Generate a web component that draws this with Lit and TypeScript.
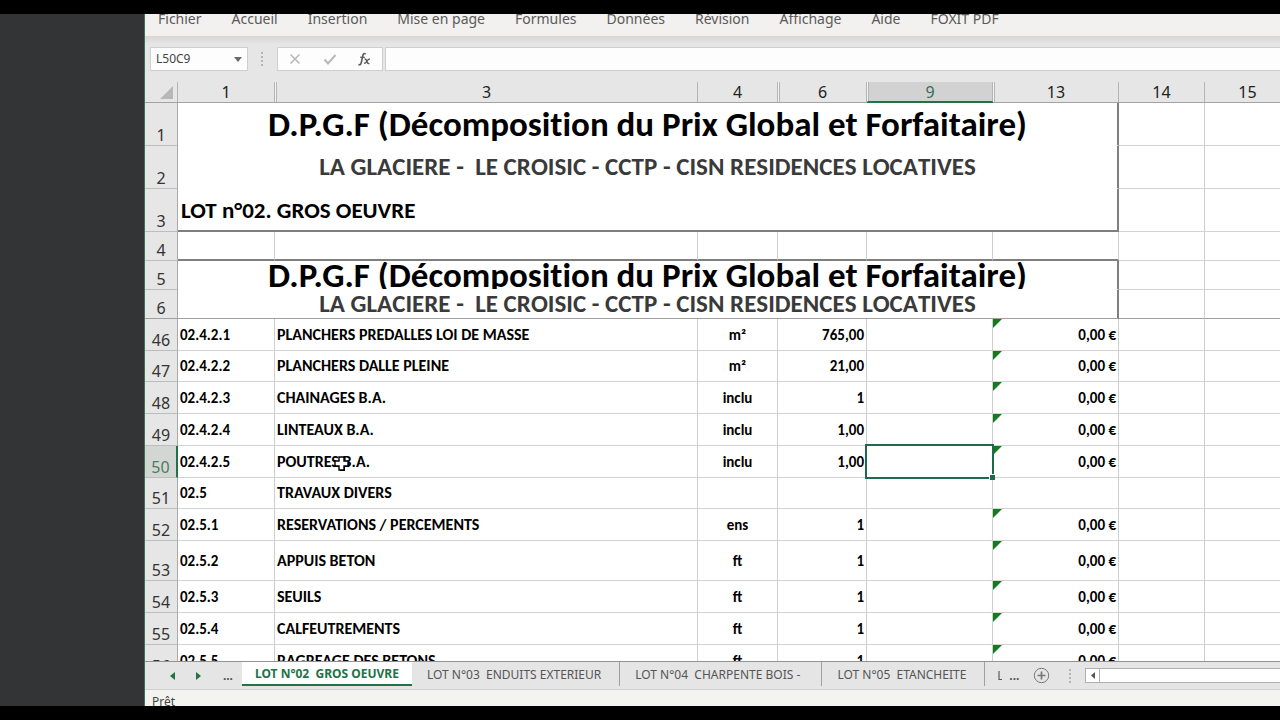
import { LitElement, html, css, nothing, svg } from "lit";
import { customElement, state } from "lit/decorators.js";
import { classMap } from "lit/directives/class-map.js";
import { styleMap } from "lit/directives/style-map.js";

interface Line {
  row: number;
  height: number;
  code: string;
  label: string;
  unit?: string;
  qty?: string;
  total?: string;
}

const MENUS = ["Fichier", "Accueil", "Insertion", "Mise en page", "Formules", "Données", "Révision", "Affichage", "Aide", "FOXIT PDF"];

const COLUMNS = [
  { name: "1", width: 97 },
  { name: "3", width: 423, afterHidden: true },
  { name: "4", width: 80 },
  { name: "6", width: 89, afterHidden: true },
  { name: "9", width: 126, afterHidden: true, active: true },
  { name: "13", width: 126, afterHidden: true },
  { name: "14", width: 86 },
  { name: "15", width: 86 },
];

const TITLE = "D.P.G.F (Décomposition du Prix Global et Forfaitaire)";
const SUBTITLE = "LA GLACIERE -\u00a0 LE CROISIC - CCTP - CISN RESIDENCES LOCATIVES";

const LINES: Line[] = [
  { row: 46, height: 32, code: "02.4.2.1", label: "PLANCHERS PREDALLES LOI DE MASSE", unit: "m²", qty: "765,00", total: "0,00 €" },
  { row: 47, height: 31, code: "02.4.2.2", label: "PLANCHERS DALLE PLEINE", unit: "m²", qty: "21,00", total: "0,00 €" },
  { row: 48, height: 32, code: "02.4.2.3", label: "CHAINAGES B.A.", unit: "inclu", qty: "1", total: "0,00 €" },
  { row: 49, height: 32, code: "02.4.2.4", label: "LINTEAUX B.A.", unit: "inclu", qty: "1,00", total: "0,00 €" },
  { row: 50, height: 32, code: "02.4.2.5", label: "POUTRES B.A.", unit: "inclu", qty: "1,00", total: "0,00 €" },
  { row: 51, height: 31, code: "02.5", label: "TRAVAUX DIVERS" },
  { row: 52, height: 32, code: "02.5.1", label: "RESERVATIONS / PERCEMENTS", unit: "ens", qty: "1", total: "0,00 €" },
  { row: 53, height: 40, code: "02.5.2", label: "APPUIS BETON", unit: "ft", qty: "1", total: "0,00 €" },
  { row: 54, height: 32, code: "02.5.3", label: "SEUILS", unit: "ft", qty: "1", total: "0,00 €" },
  { row: 55, height: 32, code: "02.5.4", label: "CALFEUTREMENTS", unit: "ft", qty: "1", total: "0,00 €" },
  { row: 56, height: 32, code: "02.5.5", label: "RAGREAGE DES BETONS", unit: "ft", qty: "1", total: "0,00 €" },
];

const SHEETS = [
  "LOT N°02\u00a0 GROS OEUVRE",
  "LOT N°03\u00a0 ENDUITS EXTERIEUR",
  "LOT N°04\u00a0 CHARPENTE BOIS -\u00a0",
  "LOT N°05\u00a0 ETANCHEITE",
];

const rowHeight = (h: number) => styleMap({ "--h": `${h}px` });
const grip = html`<svg class="grip" viewBox="0 0 3 14" aria-hidden="true">
  ${[1, 5, 9, 13].map((y) => svg`<rect x="0" y=${y - 1} width="2" height="2" fill="#b4b4b4" />`)}
</svg>`;

@customElement("sheet-grid")
class SheetGrid extends LitElement {
  static styles = css`
    :host {
      display: block;
      overflow: hidden;
      background: #fff;
    }
    table {
      table-layout: fixed;
      width: 1146px;
      min-width: 100%;
      border-collapse: separate;
      border-spacing: 0;
      font: bold 15px/20px Carlito, Calibri, Lato, sans-serif;
      color: #000;
    }
    .c-head {
      width: 33px;
    }
    th,
    td {
      box-sizing: border-box;
      padding: 0;
      border-right: 1px solid #cbcfcd;
      border-bottom: 1px solid #d3d3d3;
      vertical-align: middle;
    }
    thead th {
      height: 21px;
      border-right: 0;
      border-bottom-color: #a3a3a3;
      background: #e6e6e6;
      font: 16px/20px "Noto Sans", "Open Sans", sans-serif;
      color: #222;
    }
    .name {
      display: block;
      box-sizing: border-box;
      height: 20px;
      border-right: 1px solid #b5b5b5;
    }
    .after-hidden .name {
      border-left: 1px solid #f4f4f4;
      box-shadow: inset 1px 0 #b5b5b5;
    }
    .active .name {
      border-bottom: 1px solid #217346;
      background: #d2d2d2;
      color: #33705a;
    }
    thead .active {
      border-bottom-color: #217346;
    }
    .corner {
      display: block;
      width: 13px;
      height: 13px;
      margin: 0 4px 0 auto;
      padding-top: 4px;
      fill: #b7b7b7;
    }
    tbody th {
      height: var(--h);
      border-right-color: #a9a9a9;
      border-bottom-color: #bdbdbd;
      background: #e6e6e6;
      font: 16px/20px "Noto Sans", "Open Sans", sans-serif;
      color: #333;
      vertical-align: bottom;
    }
    tbody th.current {
      border-right: 2px solid #217346;
      background: #d3d7d4;
      color: #4b7c64;
    }
    td {
      position: relative;
      height: var(--h);
    }
    .box {
      display: flex;
      align-items: center;
      height: calc(var(--h) - 2px);
      padding: 0 2px;
      overflow: hidden;
      white-space: nowrap;
    }
    .center {
      justify-content: center;
    }
    .right {
      justify-content: flex-end;
    }
    .label {
      font-size: 16px;
    }
    .title {
      font-size: 35px;
      line-height: 42px;
      font-variant-ligatures: none;
    }
    .subtitle {
      font-size: 25px;
      line-height: 30px;
      font-kerning: none;
      color: #3a3a3a;
    }
    .lot {
      padding-left: 3px;
      font-size: 23px;
      line-height: 28px;
    }
    .merged {
      border-right: 2px solid #7f7f7f;
      border-bottom-color: #fff;
    }
    .edge td.framed {
      border-bottom: 2px solid #7f7f7f;
    }
    .frozen th,
    .frozen td {
      border-bottom-color: #9f9f9f;
    }
    .flag::before {
      content: "";
      position: absolute;
      top: 0;
      left: 0;
      width: 9px;
      height: 9px;
      background: #147a1e;
      clip-path: polygon(0 0, 100% 0, 0 100%);
    }
    .selection {
      position: absolute;
      inset: -2px;
      border: 2px solid #1f6a4a;
      z-index: 1;
    }
    .selection::after {
      content: "";
      position: absolute;
      right: -3px;
      bottom: -3px;
      width: 5px;
      height: 5px;
      border: 1px solid #fff;
      border-width: 1px 0 0 1px;
      background: #1f6a4a;
    }
    .pointer {
      position: absolute;
      top: 10px;
      left: 59px;
      width: 16px;
      height: 16px;
    }
  `;

  private blanks(count: number) {
    return Array.from({ length: count }, () => html`<td></td>`);
  }

  private banner(row: number, height: number, kind: string, text: string, frozen = false, edge = false) {
    return html`<tr class=${classMap({ frozen, edge })} style=${rowHeight(height)}>
      <th scope="row">${row}</th>
      <td class="merged framed" colspan="6">
        <div class="box ${kind}">${text}</div>
      </td>
      ${this.blanks(2)}
    </tr>`;
  }

  private line(l: Line) {
    const current = l.row === 50;
    return html`<tr style=${rowHeight(l.height)}>
      <th scope="row" class=${classMap({ current })}>${l.row}</th>
      <td><div class="box">${l.code}</div></td>
      <td>
        <div class="box label">${l.label}</div>
        ${current
          ? html`<svg class="pointer" viewBox="0 0 16 16" aria-hidden="true">
              <path d="M6 2h5v4h4v5h-4v4H6v-4H2V6h4z" fill="#000" />
              <path d="M5 1h5v4h4v5h-4v4H5v-4H1V5h4z" fill="#fff" stroke="#000" stroke-width="1.4" />
            </svg>`
          : nothing}
      </td>
      <td><div class="box center">${l.unit}</div></td>
      <td><div class="box right">${l.qty}</div></td>
      <td>${current ? html`<div class="selection"></div>` : nothing}</td>
      <td class=${classMap({ flag: !!l.total })}><div class="box right">${l.total}</div></td>
      ${this.blanks(2)}
    </tr>`;
  }

  render() {
    return html`<table>
      <colgroup>
        <col class="c-head" />
        ${COLUMNS.map((c) => html`<col style=${styleMap({ width: `${c.width}px` })} />`)}
      </colgroup>
      <thead>
        <tr>
          <th>
            <span class="name"><svg class="corner" viewBox="0 0 13 13" aria-hidden="true"><path d="M13 0v13H0z" /></svg></span>
          </th>
          ${COLUMNS.map(
            (c) => html`<th scope="col" class=${classMap({ "after-hidden": !!c.afterHidden, active: !!c.active })}>
              <span class="name">${c.name}</span>
            </th>`,
          )}
        </tr>
      </thead>
      <tbody>
        ${this.banner(1, 43, "title center", TITLE)} ${this.banner(2, 43, "subtitle center", SUBTITLE)}
        ${this.banner(3, 43, "lot", "LOT n°02. GROS OEUVRE", false, true)}
        <tr class="edge" style=${rowHeight(29)}>
          <th scope="row">4</th>
          ${Array.from({ length: 6 }, () => html`<td class="framed"></td>`)} ${this.blanks(2)}
        </tr>
        ${this.banner(5, 29, "title center", TITLE)} ${this.banner(6, 29, "subtitle center", SUBTITLE, true)}
        ${LINES.map((l) => this.line(l))}
      </tbody>
    </table>`;
  }
}

@customElement("app-root")
class AppRoot extends LitElement {
  @state() private sheet = 0;

  static styles = css`
    :host {
      display: grid;
      grid-template-columns: 144px minmax(0, 1fr);
      box-sizing: border-box;
      height: 100vh;
      padding: 14px 0;
      background: #000;
      font: 12px/20px "Noto Sans", "Open Sans", sans-serif;
      color: #444;
    }
    button,
    input {
      margin: 0;
      padding: 0;
      border: 0;
      background: none;
      font: inherit;
      color: inherit;
    }
    .desktop {
      background: #333435;
    }
    .window {
      display: flex;
      flex-direction: column;
      min-height: 0;
      border-left: 1px solid #3f6e59;
      background: #e6e6e6;
    }
    .ribbon {
      display: flex;
      flex: none;
      align-items: flex-end;
      gap: 30px;
      height: 22px;
      padding: 0 13px;
      overflow: hidden;
      background: #f2f1ef;
      font-size: 14px;
      color: #5a5a5a;
    }
    .ribbon button {
      flex: none;
      height: 20px;
      margin-bottom: 7px;
    }
    .formula {
      display: flex;
      flex: none;
      align-items: center;
      padding: 11px 0 11px 5px;
      background: linear-gradient(#d6d6d6, #e6e6e6 8px);
    }
    .field {
      display: flex;
      align-items: center;
      box-sizing: border-box;
      height: 24px;
      border: 1px solid #cfcfcf;
      background: #fdfdfd;
    }
    .name-box {
      width: 98px;
      padding: 0 5px;
    }
    .name-box input {
      flex: 1;
      min-width: 0;
    }
    .name-box button,
    .tools button {
      display: flex;
    }
    .tools {
      justify-content: space-between;
      width: 106px;
      margin-right: 2px;
      padding: 0 11px 0 10px;
    }
    .icon {
      width: 14px;
      height: 14px;
    }
    .arrow {
      width: 8px;
      height: 5px;
      fill: #6a6a6a;
    }
    .grip {
      flex: none;
      width: 3px;
      height: 14px;
      margin: 0 13px;
    }
    .entry {
      flex: 1;
      border-right: 0;
    }
    .entry input {
      width: 100%;
    }
    sheet-grid {
      flex: 1;
      min-height: 0;
    }
    .tabs {
      display: flex;
      flex: none;
      align-items: center;
      height: 27px;
      border-top: 1px solid #929292;
      border-bottom: 1px solid #d0d0d0;
      background: #e5e5e5;
      color: #555;
    }
    .nav {
      display: flex;
      flex: none;
      align-items: center;
      justify-content: space-between;
      box-sizing: border-box;
      width: 97px;
      padding: 0 9px 0 25px;
    }
    .nav button {
      display: flex;
    }
    .nav svg {
      width: 5px;
      height: 8px;
      fill: #217346;
    }
    .more {
      font-weight: bold;
    }
    .tab {
      flex: none;
      align-self: flex-start;
      box-sizing: border-box;
      height: 24px;
      padding: 2px 18px 0 15px;
      border-right: 1px solid #a0a0a0;
      white-space: nowrap;
    }
    .tab.on {
      padding: 2px 13px 0;
      border-right: 0;
      border-bottom: 2px solid #217346;
      background: #fff;
      font-weight: bold;
      color: #217346;
    }
    .cut {
      width: 5px;
      margin: 0 7px 0 12px;
      overflow: hidden;
    }
    .add {
      display: flex;
      margin: 0 6px 0 14px;
    }
    .add svg {
      width: 17px;
      height: 17px;
    }
    .scroll {
      display: flex;
      flex: 1;
      box-sizing: border-box;
      height: 15px;
      border: 1px solid #b0b0b0;
      border-right: 0;
      background: #fff;
    }
    .scroll button {
      display: flex;
      align-items: center;
      justify-content: center;
      width: 14px;
      border-right: 1px solid #b0b0b0;
    }
    .scroll svg {
      width: 4px;
      height: 7px;
      fill: #555;
    }
    .status {
      flex: none;
      box-sizing: border-box;
      height: 16px;
      padding: 2px 7px 0;
      overflow: hidden;
      background: #f3f3ef;
    }
  `;

  render() {
    return html`
      <div class="desktop"></div>
      <main class="window">
        <nav class="ribbon">${MENUS.map((m) => html`<button type="button">${m}</button>`)}</nav>
        <div class="formula">
          <div class="field name-box">
            <input aria-label="Zone Nom" .value=${"L50C9"} />
            <button type="button" aria-label="Liste des noms">
              <svg class="arrow" viewBox="0 0 8 5"><path d="M0 0h8L4 5z" /></svg>
            </button>
          </div>
          ${grip}
          <div class="field tools">
            <button type="button" aria-label="Annuler">
              <svg class="icon" viewBox="0 0 14 14"><path d="M2.500 2.500l9 9M11.500 2.500l-9 9" stroke="#b8b8b8" stroke-width="1.500" fill="none" /></svg>
            </button>
            <button type="button" aria-label="Entrer">
              <svg class="icon" viewBox="0 0 14 14"><path d="M1.500 7.500l3.500 4 7.500-8.500" stroke="#b8b8b8" stroke-width="2" fill="none" /></svg>
            </button>
            <button type="button" aria-label="Insérer une fonction">
              <svg class="icon" viewBox="0 0 14 14" fill="none" stroke="#5c5c5c">
                <path d="M8.6 2.2C7.4.9 6.2 1.7 5.8 3.5L4.3 10.5C3.9 12.4 2.9 13.3 1.4 12.5" stroke-width="1.6" />
                <path d="M3.2 5.3h4.600" stroke-width="1.300" />
                <path d="M7.6 7c1.500-.4 1.800.5 2.300 2.300s1 2.600 2.500 2M12.900 7c-1.400-.2-2.300 1-3.100 2.300s-1.400 2.200-2.700 2" stroke-width="1.400" />
              </svg>
            </button>
          </div>
          <div class="field entry"><input aria-label="Barre de formule" /></div>
        </div>
        <sheet-grid></sheet-grid>
        <div class="tabs">
          <div class="nav">
            <button type="button" aria-label="Feuille précédente"><svg viewBox="0 0 5 8"><path d="M5 0v8L0 4z" /></svg></button>
            <button type="button" aria-label="Feuille suivante"><svg viewBox="0 0 5 8"><path d="M0 0v8l5-4z" /></svg></button>
            <button type="button" class="more">...</button>
          </div>
          ${SHEETS.map(
            (s, i) => html`<button type="button" class=${classMap({ tab: true, on: i === this.sheet })} @click=${() => (this.sheet = i)}>${s}</button>`,
          )}
          <button type="button" class="cut">L</button>
          <button type="button" class="more">...</button>
          <button type="button" class="add" aria-label="Nouvelle feuille">
            <svg viewBox="0 0 17 17" fill="none" stroke="#777">
              <circle cx="8.500" cy="8.500" r="7.200" />
              <path d="M8.500 4.500v8M4.500 8.500h8" stroke-width="1.700" />
            </svg>
          </button>
          ${grip}
          <div class="scroll">
            <button type="button" aria-label="Défiler à gauche"><svg viewBox="0 0 4 7"><path d="M4 0v7L0 3.500z" /></svg></button>
          </div>
        </div>
        <div class="status">Prêt</div>
      </main>
    `;
  }
}
